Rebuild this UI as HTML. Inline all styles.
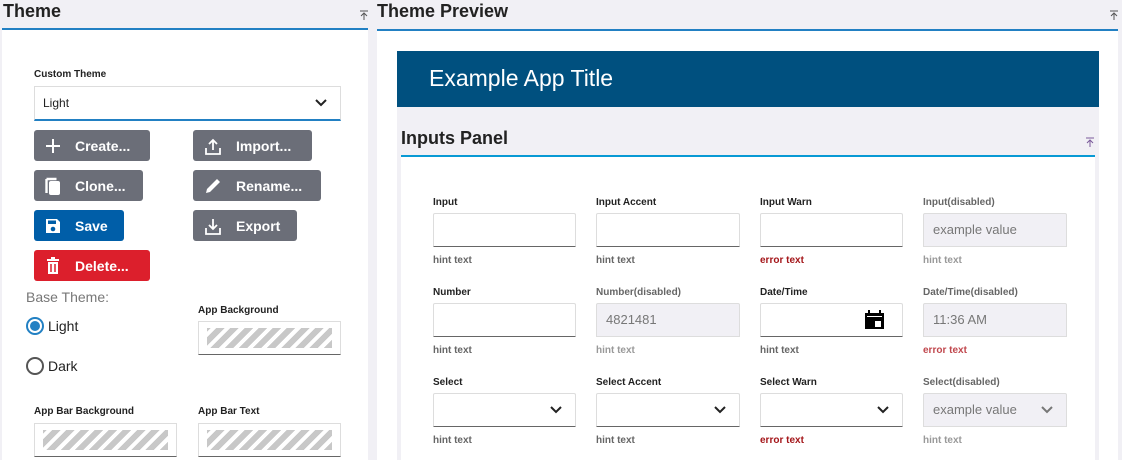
<!DOCTYPE html>
<html><head><meta charset="utf-8"><style>
*{box-sizing:border-box;margin:0;padding:0}
body{width:1122px;height:460px;overflow:hidden;background:#f1f0f5;font-family:"Liberation Sans",sans-serif;position:relative;color:#222}
.a{position:absolute}
.h{font-weight:bold;font-size:18px;color:#222}
.lbl{font-size:10px;font-weight:bold;color:#222}
.lbl.d{color:#666}
.hint{font-size:10px;font-weight:bold;color:#666}
.hint.d{color:#999}
.err{font-size:10px;font-weight:bold;color:#a4161a}
.err.d{color:#c0474d}
.inp{background:#fff;border:1px solid #ddd;border-bottom:1px solid #666;border-radius:2px 2px 0 0}
.inp.dis{background:#f1f0f5;border:1px solid #ddd;color:#777;font-size:13px;padding:8px 9px}
.btn{height:31px;border-radius:3px;background:#6b6e78;color:#fff;font-weight:bold;font-size:14px;display:flex;align-items:center;padding-left:11px}
.btn svg{margin-right:14px}
.sw{border:1px solid #ddd;border-bottom:1px solid #666;background:#fff;padding:6px 8px}
.sw div{height:20px;background:repeating-linear-gradient(-45deg,#c8c8c8 0 6px,#fff 6px 10px)}
.chev{position:absolute;right:13px;top:12px}
</style></head><body>
<!-- left panel -->
<div class="a h" style="left:3px;top:1px">Theme</div>
<svg class="a" style="left:359px;top:10px" width="10" height="11"><path d="M1 1h8M5 10V3M2 6l3-3 3 3" fill="none" stroke="#555" stroke-width="1"/></svg>
<div class="a" style="left:2px;top:28px;width:366px;height:2px;background:#2280c3"></div>
<div class="a" style="left:2px;top:30px;width:366px;height:430px;background:#fff"></div>
<div class="a lbl" style="left:34px;top:69px">Custom Theme</div>
<div class="a" style="left:34px;top:86px;width:307px;height:35px;background:#fff;border:1px solid #ddd;border-bottom:2px solid #2280c3;font-size:12px;padding:9px 8px">Light
<svg class="chev" style="right:13px;top:12px" width="12" height="8" viewBox="0 0 12 8"><path d="M1 1l5 5 5-5" fill="none" stroke="#222" stroke-width="2"/></svg></div>

<div class="a btn" style="left:34px;top:130px;width:116px"><svg width="16" height="16"><path d="M8 1v14M1 8h14" stroke="#fff" stroke-width="2"/></svg>Create...</div>
<div class="a btn" style="left:193px;top:130px;width:119px"><svg width="18" height="18"><path d="M9 13V3M5 7l4-4 4 4M2 11v6h14v-6" fill="none" stroke="#fff" stroke-width="1.8"/></svg>Import...</div>
<div class="a btn" style="left:34px;top:170px;width:109px"><svg width="16" height="18"><path d="M1.5 2v14M1.5 2h10" stroke="#fff" stroke-width="2.4"/><rect x="4" y="4" width="11" height="14" rx="2" fill="#fff"/></svg>Clone...</div>
<div class="a btn" style="left:193px;top:170px;width:128px"><svg width="18" height="18"><path d="M2 16l1-4L13 2l3 3L6 15z" fill="#fff"/></svg>Rename...</div>
<div class="a btn" style="left:34px;top:210px;width:90px;background:#005ea8"><svg width="16" height="16"><path d="M1 1h11l3 3v11H1z" fill="#fff"/><rect x="3" y="2.5" width="8" height="3.5" fill="#005ea8"/><circle cx="8" cy="11" r="2.3" fill="#005ea8"/></svg>Save</div>
<div class="a btn" style="left:193px;top:210px;width:104px"><svg width="18" height="18"><path d="M9 2v10M5 8l4 4 4-4M2 11v6h14v-6" fill="none" stroke="#fff" stroke-width="1.8"/></svg>Export</div>
<div class="a btn" style="left:34px;top:250px;width:116px;background:#dc1f2c"><svg width="16" height="18"><path d="M2 3h12M6 1h4" stroke="#fff" stroke-width="2"/><path d="M3 5h10v12H3z" fill="#fff"/><path d="M6 7v8M10 7v8" stroke="#dc1f2c" stroke-width="1.5"/></svg>Delete...</div>

<div class="a" style="left:26px;top:289px;font-size:14px;color:#777">Base Theme:</div>
<div class="a" style="left:26px;top:317px;width:18px;height:18px;border-radius:50%;border:2px solid #2280c3"><div style="margin:2px;width:10px;height:10px;border-radius:50%;background:#2280c3"></div></div>
<div class="a" style="left:48px;top:318px;font-size:14px">Light</div>
<div class="a" style="left:26px;top:357px;width:18px;height:18px;border-radius:50%;border:2px solid #555"></div>
<div class="a" style="left:48px;top:358px;font-size:14px">Dark</div>
<div class="a lbl" style="left:198px;top:305px">App Background</div>
<div class="a sw" style="left:198px;top:321px;width:143px;height:34px"><div></div></div>
<div class="a lbl" style="left:34px;top:406px">App Bar Background</div>
<div class="a sw" style="left:34px;top:423px;width:143px;height:34px"><div></div></div>
<div class="a lbl" style="left:198px;top:406px">App Bar Text</div>
<div class="a sw" style="left:198px;top:423px;width:143px;height:34px"><div></div></div>

<!-- right panel -->
<div class="a h" style="left:377px;top:1px">Theme Preview</div>
<svg class="a" style="left:1109px;top:10px" width="10" height="11"><path d="M1 1h8M5 10V3M2 6l3-3 3 3" fill="none" stroke="#555" stroke-width="1"/></svg>
<div class="a" style="left:377px;top:29px;width:741px;height:2px;background:#2280c3"></div>
<div class="a" style="left:377px;top:31px;width:741px;height:429px;background:#fff"></div>
<div class="a" style="left:397px;top:51px;width:702px;height:409px;background:#f1f0f5"></div>
<div class="a" style="left:397px;top:51px;width:702px;height:56px;background:#00507f;color:#fff;font-size:23px;padding:14px 0 0 32px">Example App Title</div>
<div class="a h" style="left:401px;top:128px">Inputs Panel</div>
<svg class="a" style="left:1085px;top:137px" width="10" height="11"><path d="M1 1h8M5 10V3M2 6l3-3 3 3" fill="none" stroke="#7a5a9a" stroke-width="1"/></svg>
<div class="a" style="left:401px;top:155px;width:694px;height:2px;background:#0899d4"></div>
<div class="a" style="left:401px;top:157px;width:694px;height:303px;background:#fff"></div>

<!-- row1 -->
<div class="a lbl" style="left:433px;top:197px">Input</div>
<div class="a inp" style="left:433px;top:213px;width:143px;height:34px"></div>
<div class="a hint" style="left:433px;top:255px">hint text</div>
<div class="a lbl" style="left:596px;top:197px">Input Accent</div>
<div class="a inp" style="left:596px;top:213px;width:144px;height:34px"></div>
<div class="a hint" style="left:596px;top:255px">hint text</div>
<div class="a lbl" style="left:760px;top:197px">Input Warn</div>
<div class="a inp" style="left:760px;top:213px;width:143px;height:34px"></div>
<div class="a err" style="left:760px;top:255px">error text</div>
<div class="a lbl d" style="left:923px;top:197px">Input(disabled)</div>
<div class="a inp dis" style="left:923px;top:213px;width:144px;height:34px">example value</div>
<div class="a hint d" style="left:923px;top:255px">hint text</div>
<!-- row2 -->
<div class="a lbl" style="left:433px;top:287px">Number</div>
<div class="a inp" style="left:433px;top:303px;width:143px;height:34px"></div>
<div class="a hint" style="left:433px;top:345px">hint text</div>
<div class="a lbl d" style="left:596px;top:287px">Number(disabled)</div>
<div class="a inp dis" style="left:596px;top:303px;width:144px;height:34px">4821481</div>
<div class="a hint d" style="left:596px;top:345px">hint text</div>
<div class="a lbl" style="left:760px;top:287px">Date/Time</div>
<div class="a inp" style="left:760px;top:303px;width:143px;height:34px"><svg class="a" style="left:103px;top:6px" width="21" height="20"><rect x="1" y="3" width="19" height="16" fill="#000"/><path d="M5 0v4M16 0v4" stroke="#000" stroke-width="2"/><rect x="3" y="6" width="15" height="1" fill="#fff"/><rect x="11" y="11" width="6" height="6" fill="#fff"/></svg></div>
<div class="a hint" style="left:760px;top:345px">hint text</div>
<div class="a lbl d" style="left:923px;top:287px">Date/Time(disabled)</div>
<div class="a inp dis" style="left:923px;top:303px;width:144px;height:34px">11:36 AM</div>
<div class="a err d" style="left:923px;top:345px">error text</div>
<!-- row3 -->
<div class="a lbl" style="left:433px;top:377px">Select</div>
<div class="a inp" style="left:433px;top:393px;width:143px;height:34px"><svg class="chev" width="12" height="8" viewBox="0 0 12 8"><path d="M1 1l5 5 5-5" fill="none" stroke="#222" stroke-width="2"/></svg></div>
<div class="a hint" style="left:433px;top:435px">hint text</div>
<div class="a lbl" style="left:596px;top:377px">Select Accent</div>
<div class="a inp" style="left:596px;top:393px;width:144px;height:34px"><svg class="chev" width="12" height="8" viewBox="0 0 12 8"><path d="M1 1l5 5 5-5" fill="none" stroke="#222" stroke-width="2"/></svg></div>
<div class="a hint" style="left:596px;top:435px">hint text</div>
<div class="a lbl" style="left:760px;top:377px">Select Warn</div>
<div class="a inp" style="left:760px;top:393px;width:143px;height:34px"><svg class="chev" width="12" height="8" viewBox="0 0 12 8"><path d="M1 1l5 5 5-5" fill="none" stroke="#222" stroke-width="2"/></svg></div>
<div class="a err" style="left:760px;top:435px">error text</div>
<div class="a lbl d" style="left:923px;top:377px">Select(disabled)</div>
<div class="a inp dis" style="left:923px;top:393px;width:144px;height:34px">example value<svg class="chev" width="12" height="8" viewBox="0 0 12 8"><path d="M1 1l5 5 5-5" fill="none" stroke="#777" stroke-width="2"/></svg></div>
<div class="a hint d" style="left:923px;top:435px">hint text</div>
</body></html>
